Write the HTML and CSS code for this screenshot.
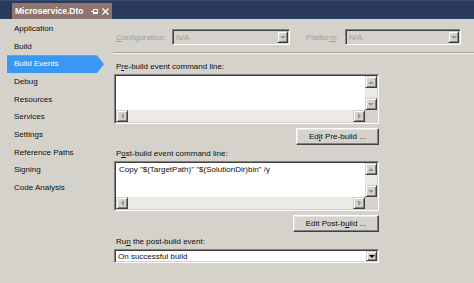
FILE: index.html
```html
<!DOCTYPE html>
<html>
<head>
<meta charset="utf-8">
<link rel="stylesheet" href="styles.css">
</head>
<body>
<div class="titlebar">
  <div class="tab">
    <span class="tab-title">Microservice.Dto</span>
    <span class="tab-icons">
      <svg width="7" height="7" viewBox="0 0 7 7"><path d="M0 3.5H2.5M2.5 1V6M2.5 1.5H6.5V5.5H2.5M2.5 4.5H6.5" stroke="#fff" stroke-width="1" fill="none"/></svg>
      <svg width="7" height="7" viewBox="0 0 7 7"><path d="M0.5 0.5L6.5 6.5M6.5 0.5L0.5 6.5" stroke="#fff" stroke-width="1.3" fill="none"/></svg>
    </span>
  </div>
</div>
<div class="main">
  <nav class="sidebar">
    <div class="nav-item">Application</div>
    <div class="nav-item">Build</div>
    <div class="nav-item active">Build Events</div>
    <div class="nav-item">Debug</div>
    <div class="nav-item">Resources</div>
    <div class="nav-item">Services</div>
    <div class="nav-item">Settings</div>
    <div class="nav-item">Reference Paths</div>
    <div class="nav-item">Signing</div>
    <div class="nav-item">Code Analysis</div>
  </nav>
  <div class="panel">
    <div class="config-row">
      <span class="lbl-dis lbl-config"><u>C</u>onfiguration:</span>
      <div class="combo combo-dis combo-config"><span class="combo-text">N/A</span><span class="drop"><span class="arrow-down dis"></span></span></div>
      <span class="lbl-dis lbl-platform">Platfor<u>m</u>:</span>
      <div class="combo combo-dis combo-platform"><span class="combo-text">N/A</span><span class="drop"><span class="arrow-down dis"></span></span></div>
    </div>
    <div class="separator"></div>
    <div class="form">
      <div class="label label-pre">P<u>r</u>e-build event command line:</div>
      <div class="textbox">
        <div class="tb-content"></div>
        <div class="vscroll">
          <span class="sbtn"><span class="arrow-up dis"></span></span>
          <span class="strack"></span>
          <span class="sbtn"><span class="arrow-down dis"></span></span>
        </div>
        <div class="hscroll">
          <span class="sbtn"><span class="arrow-left dis"></span></span>
          <span class="strack"></span>
          <span class="sbtn"><span class="arrow-right dis"></span></span>
        </div>
        <div class="corner"></div>
      </div>
      <div class="btn btn-pre">Ed<u>i</u>t Pre-build ...</div>

      <div class="label label-post">P<u>o</u>st-build event command line:</div>
      <div class="textbox">
        <div class="tb-content">Copy "$(TargetPath)"  "$(SolutionDir)bin" /y</div>
        <div class="vscroll">
          <span class="sbtn"><span class="arrow-up dis"></span></span>
          <span class="strack"></span>
          <span class="sbtn"><span class="arrow-down dis"></span></span>
        </div>
        <div class="hscroll">
          <span class="sbtn"><span class="arrow-left dis"></span></span>
          <span class="strack"></span>
          <span class="sbtn"><span class="arrow-right dis"></span></span>
        </div>
        <div class="corner"></div>
      </div>
      <div class="btn btn-post">Edit Post-b<u>u</u>ild ...</div>

      <div class="label label-run">Ru<u>n</u> the post-build event:</div>
      <div class="combo combo-run"><span class="combo-text">On successful build</span><span class="drop"><span class="arrow-down"></span></span></div>
    </div>
  </div>
</div>
</body>
</html>
```

FILE: styles.css
```css
* { box-sizing: border-box; }
html, body { margin: 0; padding: 0; }
body {
  width: 474px;
  height: 283px;
  overflow: hidden;
  background: #d5d2cb;
  font-family: "Liberation Sans", Arial, sans-serif;
  font-size: 8px;
  color: #0d0d0d;
}
u { text-decoration: underline; text-underline-offset: 1px; }

.titlebar {
  height: 19px;
  background: #2a3b5b;
  border-top: 1px solid #3a4b6b;
  display: flex;
  align-items: flex-end;
  padding-left: 12px;
}
.tab {
  width: 100px;
  height: 16px;
  background: #8e7571;
  display: flex;
  align-items: center;
  padding-left: 3px;
  color: #fff;
  font-weight: bold;
  font-size: 8.5px;
}
.tab-title { flex: 1; }
.tab-icons { display: flex; gap: 4px; margin-right: 3px; align-items: center; }
.tab-icons svg { display: block; }

.main { display: flex; height: 264px; }
.sidebar {
  width: 113px;
  padding-top: 1px;
  display: flex;
  flex-direction: column;
}
.nav-item {
  height: 17.67px;
  line-height: 17.67px;
  padding-left: 14px;
  white-space: nowrap;
}
.nav-item.active {
  margin-left: 7px;
  width: 97px;
  padding-left: 7px;
  background: #3a97f3;
  color: #fff;
  clip-path: polygon(0 0, 90px 0, 97px 50%, 90px 100%, 0 100%);
}

.panel { flex: 1; display: flex; flex-direction: column; }
.config-row {
  display: flex;
  align-items: center;
  margin-top: 10px;
  height: 16px;
}
.lbl-dis { color: #a29e97; }
.lbl-config { margin-left: 3px; width: 56px; }
.lbl-platform { margin-left: 16px; width: 39px; }
.combo-config { width: 118px; }
.combo-platform { width: 116px; }

.combo {
  height: 16px;
  display: flex;
  align-items: stretch;
  background: #fff;
  border: 1px solid;
  border-color: #808080 #fff #fff #808080;
  box-shadow: inset 1px 1px #404040, inset -1px -1px #d4d0c8;
  padding: 1px;
}
.combo-dis { background: #d5d2cb; color: #a29e97; }
.combo-text { flex: 1; padding-left: 2px; display: flex; align-items: center; }
.drop {
  width: 11px;
  background: #d5d2cb;
  border: 1px solid;
  border-color: #d4d0c8 #404040 #404040 #d4d0c8;
  box-shadow: inset 1px 1px #fff, inset -1px -1px #808080;
  display: flex;
  align-items: center;
  justify-content: center;
}

.arrow-down, .arrow-up, .arrow-left, .arrow-right { width: 0; height: 0; display: block; }
.arrow-down { border-left: 3px solid transparent; border-right: 3px solid transparent; border-top: 3px solid #000; }
.arrow-up { border-left: 3px solid transparent; border-right: 3px solid transparent; border-bottom: 3px solid #000; }
.arrow-left { border-top: 3px solid transparent; border-bottom: 3px solid transparent; border-right: 3px solid #000; }
.arrow-right { border-top: 3px solid transparent; border-bottom: 3px solid transparent; border-left: 3px solid #000; }
.arrow-down.dis { border-top-color: #9a978f; }
.arrow-up.dis { border-bottom-color: #9a978f; }
.arrow-left.dis { border-right-color: #9a978f; }
.arrow-right.dis { border-left-color: #9a978f; }

.separator {
  margin-top: 7px;
  height: 2px;
  border-top: 1px solid #a09d96;
  border-bottom: 1px solid #fbfaf8;
}

.form {
  width: 266px;
  display: flex;
  flex-direction: column;
}
.label {
  margin-left: 3px;
  height: 10px;
  line-height: 10px;
  white-space: nowrap;
}
.label-pre { margin-top: 8px; }
.label-post { margin-top: 4px; }
.label-run { margin-top: 5px; }

.textbox {
  margin-left: 1px;
  margin-top: 2px;
  width: 265px;
  height: 50px;
  border: 1px solid;
  border-color: #808080 #fff #fff #808080;
  box-shadow: inset 1px 1px #404040, inset -1px -1px #d4d0c8;
  padding: 1px;
  display: grid;
  grid-template-columns: 1fr 12px;
  grid-template-rows: 1fr 12px;
  background: #fff;
}
.tb-content {
  padding: 2px 2px 0 3px;
  line-height: 10px;
  white-space: nowrap;
  overflow: hidden;
}
.vscroll, .hscroll { display: flex; background: #eceae5; }
.vscroll { flex-direction: column; }
.strack { flex: 1; }
.sbtn {
  width: 12px;
  height: 12px;
  flex: none;
  background: #d5d2cb;
  border: 1px solid;
  border-color: #d4d0c8 #404040 #404040 #d4d0c8;
  box-shadow: inset 1px 1px #fff, inset -1px -1px #808080;
  display: flex;
  align-items: center;
  justify-content: center;
}
.corner { background: #d5d2cb; }

.btn {
  align-self: flex-end;
  height: 17px;
  margin-top: 4px;
  background: #d5d2cb;
  border: 1px solid;
  border-color: #fff #404040 #404040 #fff;
  box-shadow: inset -1px -1px #808080, inset 1px 1px #e8e6e1;
  display: flex;
  align-items: center;
  justify-content: center;
  white-space: nowrap;
}
.btn-pre { width: 83px; }
.btn-post { width: 86px; }

.combo-run {
  margin-left: 1px;
  margin-top: 2px;
  width: 265px;
  height: 14px;
}
```
